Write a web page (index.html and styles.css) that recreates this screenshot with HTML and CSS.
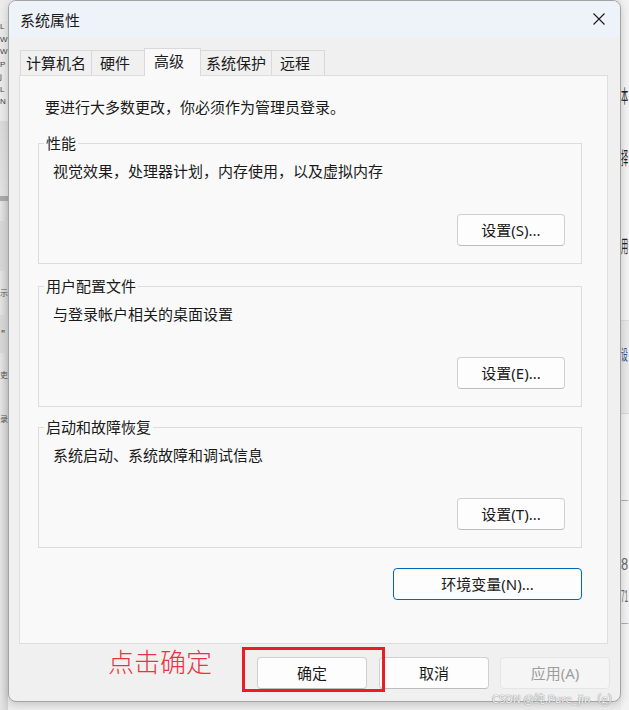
FILE: index.html
```html
<!DOCTYPE html>
<html lang="zh-CN">
<head>
    <meta charset="UTF-8">
    <meta name="viewport" content="width=device-width, initial-scale=1.0">
    <title>系统属性</title>
    <link rel="stylesheet" href="styles.css">
</head>
<body>
    <div class="desktop">
        <!-- window behind, left side -->
        <div class="bg-left">
            <div class="bl-top"></div>
            <div class="bl-list">
                <span>L</span>
                <span>W</span>
                <span>W</span>
                <span>P</span>
                <span>j</span>
                <span>L</span>
                <span>N</span>
            </div>
            <div class="bl-band bl-b1"></div>
            <div class="bl-bar"></div>
            <div class="bl-band bl-b2"></div>
            <div class="bl-row">示</div>
            <div class="bl-band bl-b3">"</div>
            <div class="bl-row">吏</div>
            <div class="bl-row">录</div>
        </div>

        <div class="dialog">
            <div class="title-bar">
                <span class="title">系统属性</span>
                <svg class="close" width="12" height="12" viewBox="0 0 12 12">
                    <path d="M0.5 0.5 L11.5 11.5 M11.5 0.5 L0.5 11.5" stroke="#1b1b1b" stroke-width="1.1" fill="none"/>
                </svg>
            </div>

            <div class="dialog-body">
                <div class="tabs">
                    <div class="tab">计算机名</div>
                    <div class="tab tab-short">硬件</div>
                    <div class="tab tab-active">高级</div>
                    <div class="tab">系统保护</div>
                    <div class="tab tab-short">远程</div>
                </div>

                <div class="panel">
                    <div class="notice">要进行大多数更改，你必须作为管理员登录。</div>

                    <div class="group">
                        <div class="group-title">性能</div>
                        <div class="group-desc">视觉效果，处理器计划，内存使用，以及虚拟内存</div>
                        <div class="group-actions">
                            <button class="btn btn-set">设置(S)...</button>
                        </div>
                    </div>

                    <div class="group group-2">
                        <div class="group-title">用户配置文件</div>
                        <div class="group-desc">与登录帐户相关的桌面设置</div>
                        <div class="group-actions">
                            <button class="btn btn-set">设置(E)...</button>
                        </div>
                    </div>

                    <div class="group group-3">
                        <div class="group-title">启动和故障恢复</div>
                        <div class="group-desc">系统启动、系统故障和调试信息</div>
                        <div class="group-actions">
                            <button class="btn btn-set">设置(T)...</button>
                        </div>
                    </div>

                    <div class="env-row">
                        <button class="btn btn-env">环境变量(N)...</button>
                    </div>
                </div>

                <div class="footer">
                    <button class="btn btn-footer">确定</button>
                    <button class="btn btn-footer">取消</button>
                    <button class="btn btn-footer" disabled>应用(A)</button>
                </div>
            </div>
        </div>

        <!-- window behind, right side -->
        <div class="bg-right">
            <div class="br-top">
                <span class="br-ch br-c1">本</span>
                <span class="br-ch br-c2">择</span>
                <span class="br-ch br-c3">用</span>
            </div>
            <div class="br-band">
                <span class="br-link">设</span>
            </div>
            <div class="br-bottom">
                <span class="br-dash br-c4">一</span>
                <span class="br-num br-n1">8</span>
                <span class="br-num">71</span>
                <span class="br-dash br-c5">一</span>
            </div>
        </div>
    </div>

    <!-- annotations drawn over the screenshot -->
    <div class="mark-box"></div>
    <div class="mark-text">点击确定</div>
    <div class="watermark">CSDN @纯.Pure_jin（g）</div>
</body>
</html>
```

FILE: styles.css
```css
body {
    margin: 0;
    width: 629px;
    height: 710px;
    overflow: hidden;
    position: relative;
    background-color: #ececec;
    font-family: "Segoe UI", "Noto Sans", "Noto Sans CJK SC", sans-serif;
    font-size: 15px;
    color: #1a1a1a;
}
.desktop {
    display: flex;
    height: 710px;
}

/* background windows */
.bg-left {
    width: 8px;
    flex-shrink: 0;
    overflow: hidden;
    display: flex;
    flex-direction: column;
    background: linear-gradient(to right, #e4e4e4, #d2d2d2);
    font-size: 8px;
    color: #444;
}
.bl-top {
    height: 21px;
    background-color: #ececec;
}
.bl-list {
    display: flex;
    flex-direction: column;
    line-height: 12.5px;
    padding-bottom: 12px;
    background-color: #e9e9e9;
    font-family: "Liberation Sans", sans-serif;
}
.bl-band {
    background-color: #d6d6d6;
}
.bl-b1 {
    height: 75px;
    background: linear-gradient(#dadada, #e2e2e2);
}
.bl-bar {
    height: 5px;
    background-color: #a9a9a9;
}
.bl-b2 {
    height: 50px;
    margin-top: 20px;
}
.bl-row {
    height: 44px;
    line-height: 44px;
    font-family: "Noto Sans CJK SC", sans-serif;
    font-size: 8px;
    color: #555;
}
.bl-b3 {
    height: 38px;
    line-height: 38px;
    font-size: 10px;
    color: #333;
    text-indent: 1px;
}

.bg-right {
    flex: 1;
    overflow: hidden;
    display: flex;
    flex-direction: column;
    align-items: flex-start;
    background-color: #f2f2f2;
    font-family: "Noto Sans CJK SC", sans-serif;
    color: #222;
}
.br-top {
    height: 320px;
    align-self: stretch;
    display: flex;
    flex-direction: column;
    align-items: flex-start;
    border-bottom: 1px solid #dcdcdc;
}
/* glyphs of the window behind, squeezed to the 8px that shows */
.br-ch,
.br-link,
.br-num,
.br-dash {
    display: inline-block;
    transform-origin: left center;
}
.br-ch {
    font-size: 18px;
    line-height: 20px;
    transform: scaleX(0.4);
}
.br-c1 {
    margin-top: 85px;
}
.br-c2 {
    margin-top: 42px;
}
.br-c3 {
    margin-top: 68px;
}
.br-band {
    height: 92px;
    align-self: stretch;
    background-color: #e8e8e8;
    border-bottom: 1px solid #d8d8d8;
}
.br-link {
    margin-top: 22px;
    font-size: 15px;
    color: #1f4f9a;
    transform: scaleX(0.45);
}
.br-bottom {
    flex: 1;
    display: flex;
    flex-direction: column;
    align-items: flex-start;
    color: #666;
}
.br-dash {
    font-size: 12px;
    color: #aaa;
    transform: scaleX(0.6);
}
.br-c4 {
    margin-top: 78px;
}
.br-num {
    font-family: "Liberation Sans", sans-serif;
    font-size: 16px;
    line-height: 20px;
    margin-top: 12px;
    transform: scaleX(0.4);
}
.br-n1 {
    margin-top: 46px;
    transform: scaleX(0.8);
}
.br-c5 {
    margin-top: 8px;
}

/* dialog */
.dialog {
    position: relative;
    z-index: 1;
    width: 613px;
    height: 702px;
    flex-shrink: 0;
    box-sizing: border-box;
    border: 1px solid #a3a3a3;
    border-radius: 8px;
    background-color: #f0f0f0;
    display: flex;
    flex-direction: column;
    overflow: hidden;
    box-shadow: 0 2px 8px rgba(0,0,0,0.18);
}
.title-bar {
    height: 36px;
    flex-shrink: 0;
    display: flex;
    align-items: center;
    justify-content: space-between;
    padding: 0 15px 0 11px;
    background-color: #eef3f9;
    font-family: "Noto Sans CJK SC", sans-serif;
}
.title {
    line-height: 20px;
    margin-top: 1px;
}
.close {
    display: block;
}
.dialog-body {
    flex: 1;
    display: flex;
    flex-direction: column;
    padding: 11px 12px 0 10px;
}

/* tabs */
.tabs {
    display: flex;
    align-items: flex-end;
    height: 28px;
    margin: 0 0 -1px 1px;
    position: relative;
    z-index: 1;
    font-family: "Noto Sans CJK SC", sans-serif;
}
.tab {
    height: 24px;
    line-height: 24px;
    padding: 0 5px;
    border: 1px solid #d9d9d9;
    border-bottom: none;
    border-right: none;
    background-color: #f0f0f0;
    margin-bottom: 1px;
}
.tab:last-child {
    border-right: 1px solid #d9d9d9;
}
.tab-short {
    padding: 0 14px 0 8px;
}
.tab-active {
    height: 27px;
    line-height: 24px;
    padding: 0 16px 0 9px;
    margin-bottom: 0;
    background-color: #f9f9f9;
    border-right: 1px solid #d9d9d9;
}
.tab-active + .tab {
    border-left: none;
}

/* panel */
.panel {
    height: 569px;
    box-sizing: border-box;
    border: 1px solid #dedede;
    background-color: #f9f9f9;
    padding: 21px 25px 0 18px;
    display: flex;
    flex-direction: column;
    font-family: "Noto Sans CJK SC", sans-serif;
}
.notice {
    line-height: 20px;
    margin-left: 7px;
}
.group {
    height: 121px;
    box-sizing: border-box;
    margin-top: 26px;
    border: 1px solid #dcdcdc;
    padding: 0 16px 0 14px;
    display: flex;
    flex-direction: column;
}
.group-2 {
    margin-top: 22px;
}
.group-3 {
    margin-top: 20px;
}
.group-title {
    align-self: flex-start;
    line-height: 20px;
    margin: -11px 0 0 -9px;
    padding: 0 2px;
    background-color: #f9f9f9;
}
.group-desc {
    line-height: 20px;
    margin-top: 8px;
}
.group-actions {
    margin-top: auto;
    margin-bottom: 17px;
    display: flex;
    justify-content: flex-end;
}

/* buttons */
.btn {
    height: 32px;
    box-sizing: border-box;
    border: 1px solid #d0d0d0;
    border-bottom-color: #bdbdbd;
    border-radius: 4px;
    background-color: #fdfdfd;
    font-family: "Segoe UI", "Noto Sans", "Noto Sans CJK SC", sans-serif;
    font-size: 15px;
    color: #1a1a1a;
    padding: 0;
    line-height: 28px;
}
.btn-set {
    width: 108px;
}
.env-row {
    margin-top: 20px;
    display: flex;
    justify-content: flex-end;
}
.btn-env {
    width: 189px;
    border: 1px solid #0067c0;
    border-bottom-color: #0067c0;
}
.footer {
    margin: 13px -2px 0 0;
    display: flex;
    justify-content: flex-end;
    gap: 11px;
}
.btn-footer {
    width: 110px;
}
.btn-footer:first-child {
    margin-right: 1px;
}
.btn-footer:disabled {
    background-color: #f5f5f5;
    border-color: #e5e5e5;
    color: #9d9d9d;
}

/* annotations */
.mark-box {
    position: absolute;
    z-index: 2;
    left: 242px;
    top: 647px;
    width: 143px;
    height: 45px;
    box-sizing: border-box;
    border: 3px solid #ec1c24;
}
.mark-text {
    position: absolute;
    z-index: 2;
    left: 108px;
    top: 645px;
    font-family: "Noto Sans CJK SC", sans-serif;
    font-weight: 300;
    font-size: 26px;
    line-height: 32px;
    color: #ea3342;
}
.watermark {
    position: absolute;
    z-index: 2;
    left: 492px;
    top: 690px;
    font-family: "Noto Sans CJK SC", sans-serif;
    font-size: 11px;
    line-height: 16px;
    white-space: nowrap;
    color: rgba(255,255,255,0.92);
    text-shadow: 0 0 1px #8a8a8a, 0 0 1px #8a8a8a;
}
```
